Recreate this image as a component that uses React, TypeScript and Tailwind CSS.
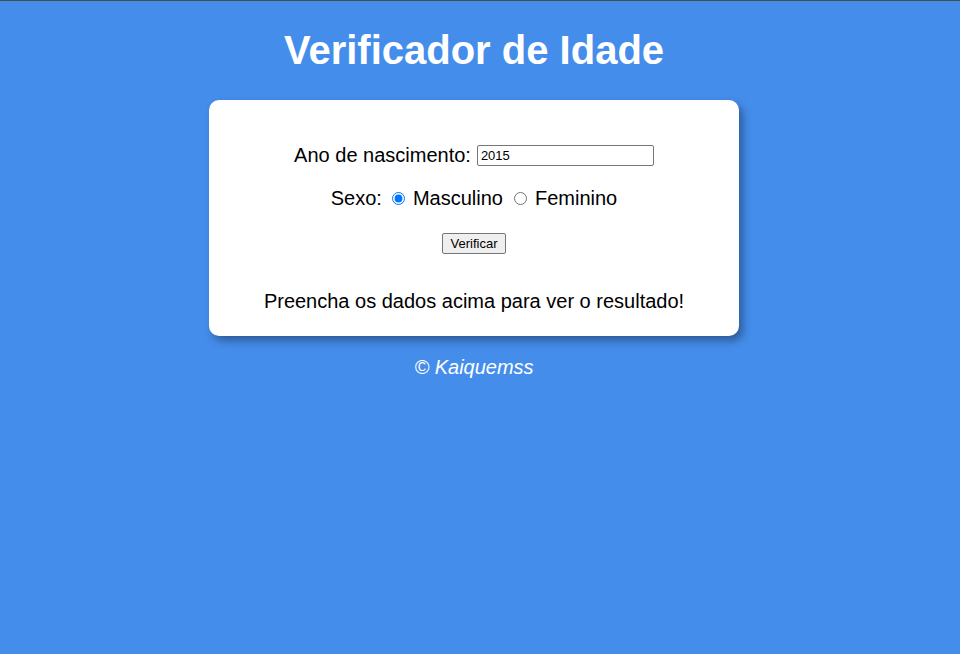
export default function App() {
  return (
    <div
      className="min-h-[654px] w-full bg-[#458deb] border-t border-[#4b4b4b] text-black"
      style={{ fontFamily: '"Liberation Sans", Arial, sans-serif' }}
    >
      <div className="w-[948px] flex flex-col items-center">
        {/* Title */}
        <h1 className="mt-[26px] h-[46px] leading-[46px] text-[40px] font-bold text-white">
          Verificador de Idade
        </h1>

        {/* Card */}
        <div className="mt-[27px] w-[530px] h-[236px] bg-white rounded-[10px] shadow-[4px_5px_8px_rgba(0,0,0,0.35)] flex flex-col items-center pt-[40px]">
          <div className="h-[30px] flex items-center text-[20px]">
            <label htmlFor="ano">Ano de nascimento:</label>
            <input
              id="ano"
              type="text"
              defaultValue="2015"
              className="ml-[6px] w-[177px] h-[21px] border border-[#767676] rounded-[2px] px-[3px] text-[13px] leading-none bg-white"
            />
          </div>

          <div className="mt-[13px] h-[30px] flex items-center text-[20px]">
            <span>Sexo:</span>
            <input
              type="radio"
              name="sexo"
              defaultChecked
              className="ml-[10px] mr-[8px] w-[13px] h-[13px] accent-[#0075ff]"
            />
            <span>Masculino</span>
            <input
              type="radio"
              name="sexo"
              className="ml-[11px] mr-[8px] w-[13px] h-[13px] accent-[#0075ff]"
            />
            <span>Feminino</span>
          </div>

          <button className="mt-[20px] h-[21px] px-[8px] text-[13px] bg-[#efefef] border border-[#767676] rounded-[2px] leading-none">
            Verificar
          </button>

          <p className="mt-[32px] h-[30px] leading-[30px] text-[20px]">
            Preencha os dados acima para ver o resultado!
          </p>
        </div>

        {/* Footer */}
        <p className="mt-[19px] h-[24px] leading-[24px] text-[20px] italic text-white">
          © Kaiquemss
        </p>
      </div>
    </div>
  );
}
